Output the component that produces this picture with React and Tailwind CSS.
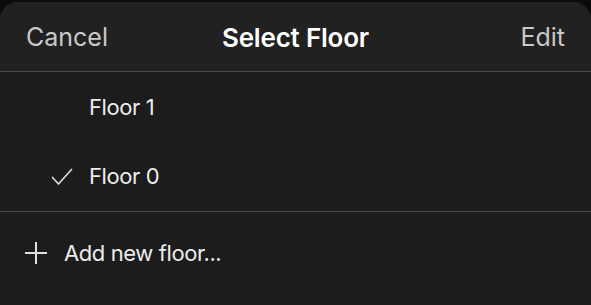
export default function App() {
    const floors = [
        { name: "Floor 1", selected: false },
        { name: "Floor 0", selected: true },
    ];

    return (
        <div
            className="w-[591px] h-[305px] bg-[#0b0b0b] pt-[2px] overflow-hidden"
            style={{ fontFamily: "Inter, 'Noto Sans', sans-serif" }}
        >
            <div className="h-[303px] rounded-t-[18px] bg-[#1c1c1c] overflow-hidden">
                {/* header */}
                <div className="h-[70px] bg-[#212121] pl-[26px] pr-[26px] pt-[2px] flex items-center justify-between border-b border-[#4a4a4a]">
                    <span className="text-[25px] text-[#c9c9c9] w-[110px]">
                        Cancel
                    </span>
                    <span className="text-[26px] font-semibold text-white tracking-[-0.2px]">
                        Select Floor
                    </span>
                    <span className="text-[25px] text-[#c9c9c9] w-[110px] text-right">
                        Edit
                    </span>
                </div>

                {/* floors */}
                <div className="pt-[1px] border-b border-[#4a4a4a]">
                    {floors.map((f) => (
                        <div
                            key={f.name}
                            className="h-[69px] flex items-center"
                        >
                            <div className="w-[89px] flex justify-end pr-[16px]">
                                {f.selected && (
                                    <svg
                                        width="22"
                                        height="18"
                                        viewBox="0 0 22 18"
                                        fill="none"
                                        stroke="#d9d9d9"
                                        strokeWidth="1.7"
                                        strokeLinecap="round"
                                        strokeLinejoin="round"
                                    >
                                        <path d="M1.5 9.5 L7.5 16 L20.5 1.5" />
                                    </svg>
                                )}
                            </div>
                            <span className="text-[22px] text-[#ececec] tracking-[-0.4px]">
                                {f.name}
                            </span>
                        </div>
                    ))}
                </div>

                {/* add new */}
                <div className="h-[80px] pt-[2px] flex items-center pl-[25px]">
                    <svg
                        width="22"
                        height="22"
                        viewBox="0 0 22 22"
                        stroke="#e0e0e0"
                        strokeWidth="2"
                    >
                        <path d="M11 0 V22 M0 11 H22" />
                    </svg>
                    <span className="ml-[17px] text-[22px] text-[#ececec] tracking-[-0.4px]">
                        Add new floor...
                    </span>
                </div>
            </div>
        </div>
    );
}
